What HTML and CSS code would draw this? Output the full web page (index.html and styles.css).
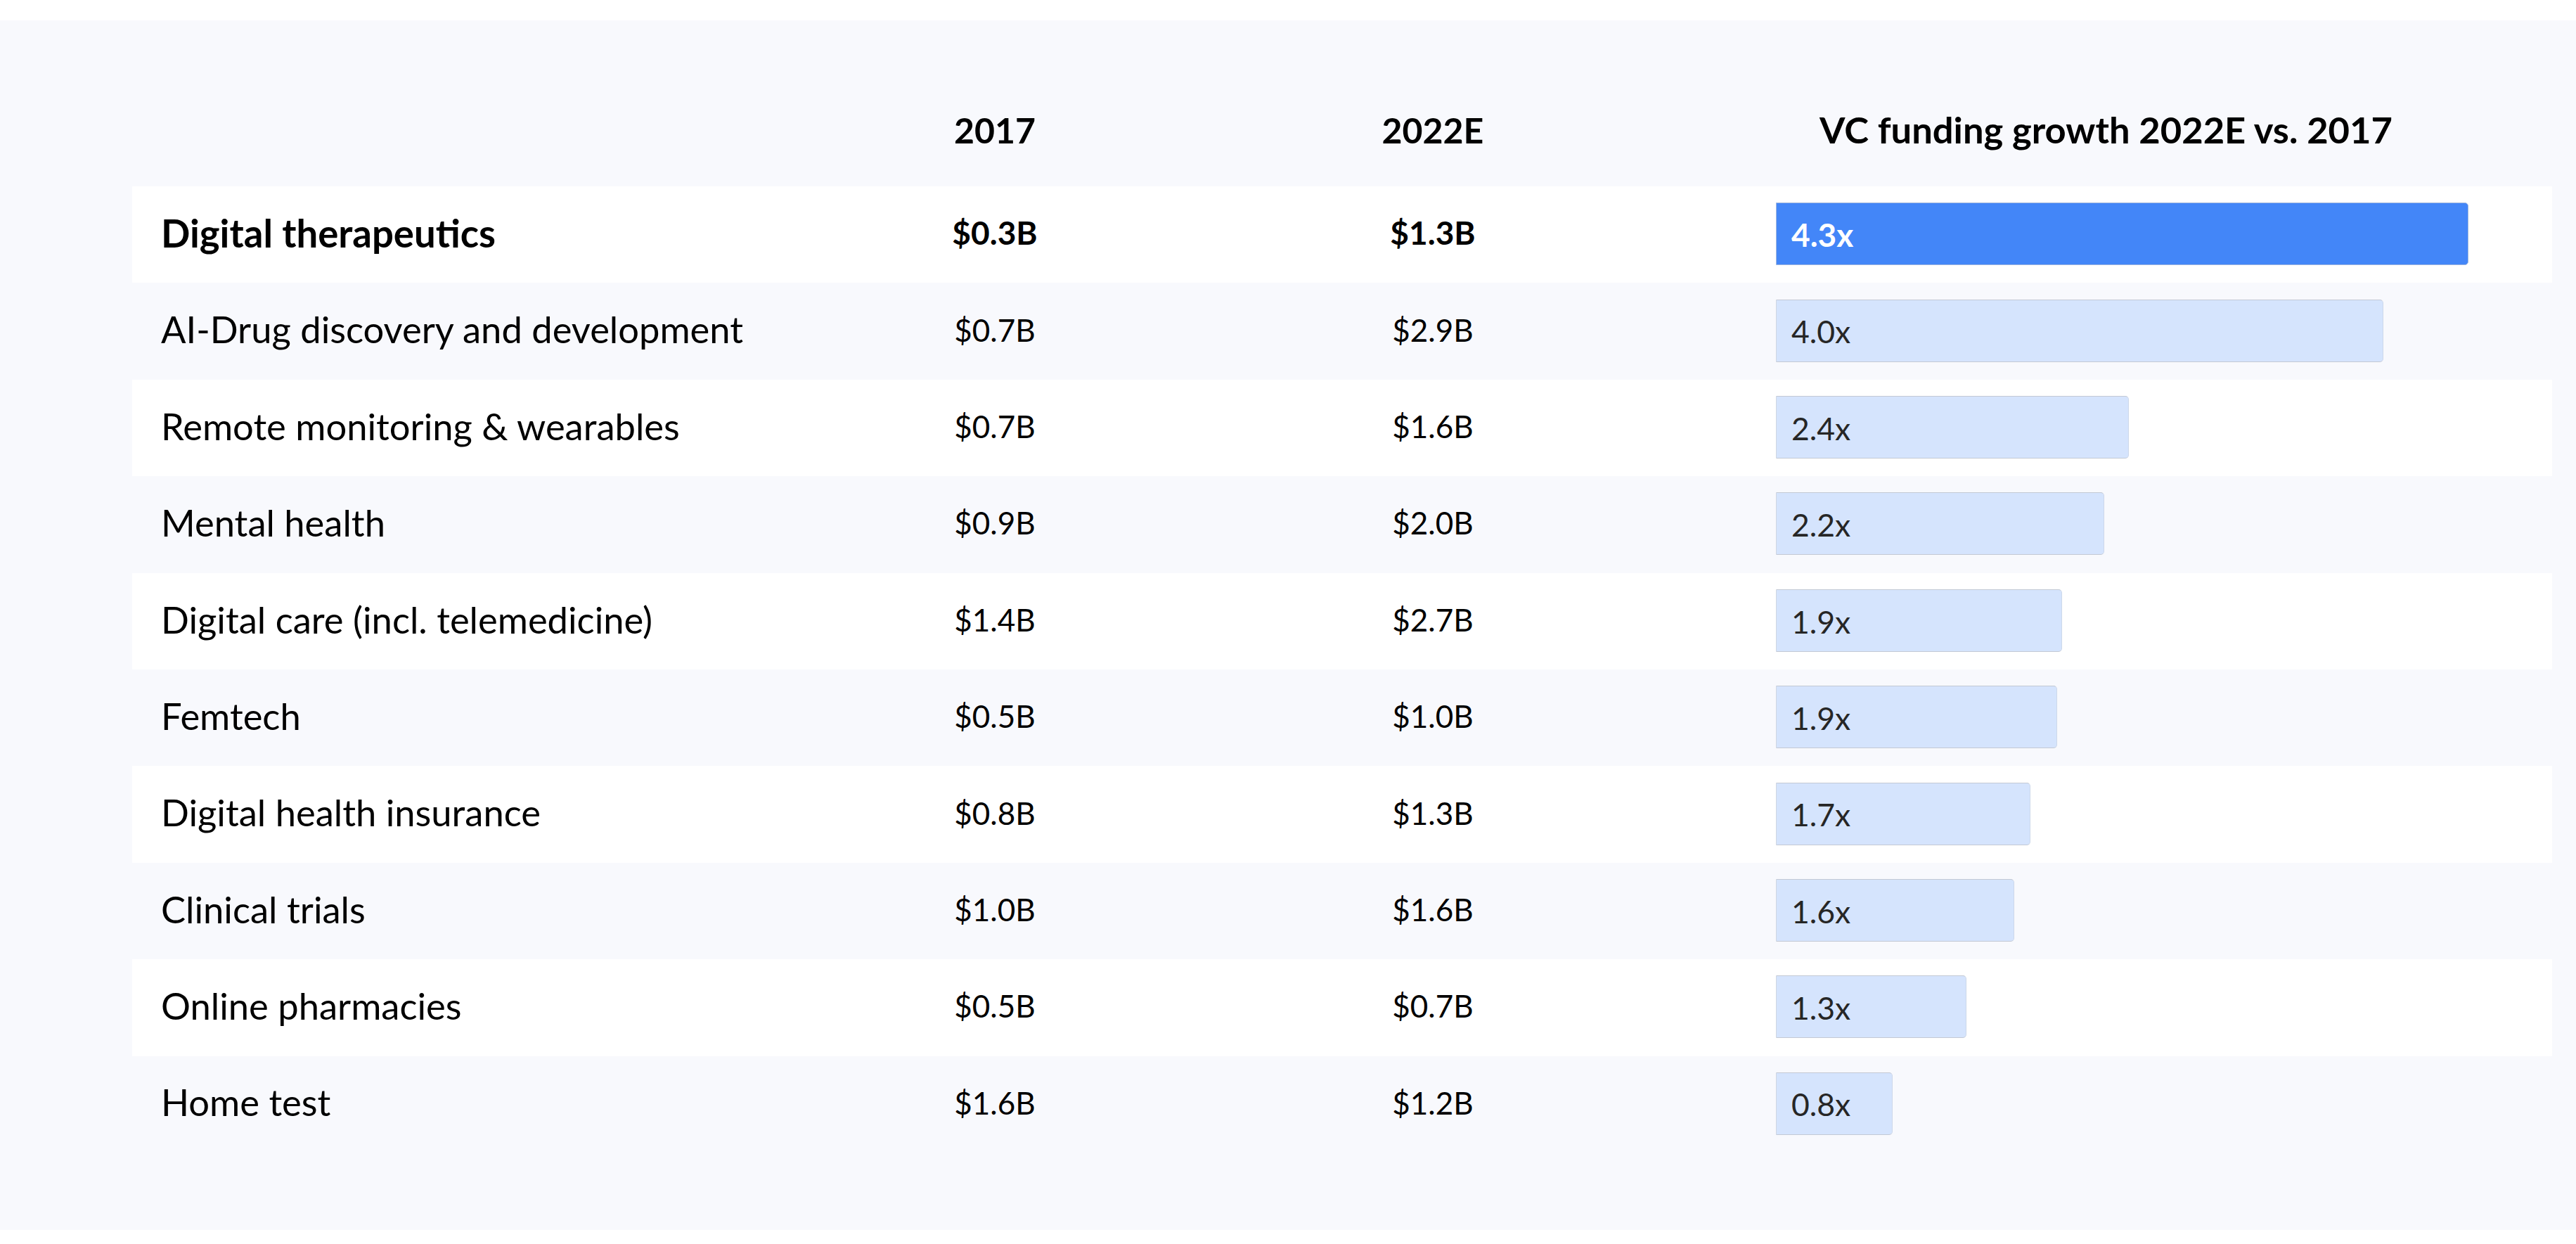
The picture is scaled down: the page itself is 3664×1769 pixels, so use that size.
FILE: index.html
```html
<!DOCTYPE html>
<html lang="en">
<head>
<meta charset="utf-8">
<title>VC funding growth</title>
<link rel="stylesheet" href="styles.css">
</head>
<body>
<div class="panel">
  <div class="table">
    <div class="row head">
      <div class="cell label"></div>
      <div class="cell num">2017</div>
      <div class="cell num">2022E</div>
      <div class="cell growth-head">VC funding growth 2022E vs. 2017</div>
    </div>
    <div class="row strong">
      <div class="cell label">Digital therapeutics</div>
      <div class="cell num">$0.3B</div>
      <div class="cell num">$1.3B</div>
      <div class="cell bar-cell"><div class="bar primary" style="width:985px">4.3x</div></div>
    </div>
    <div class="row">
      <div class="cell label">AI-Drug discovery and development</div>
      <div class="cell num">$0.7B</div>
      <div class="cell num">$2.9B</div>
      <div class="cell bar-cell"><div class="bar" style="width:864px">4.0x</div></div>
    </div>
    <div class="row">
      <div class="cell label">Remote monitoring &amp; wearables</div>
      <div class="cell num">$0.7B</div>
      <div class="cell num">$1.6B</div>
      <div class="cell bar-cell"><div class="bar" style="width:502px">2.4x</div></div>
    </div>
    <div class="row">
      <div class="cell label">Mental health</div>
      <div class="cell num">$0.9B</div>
      <div class="cell num">$2.0B</div>
      <div class="cell bar-cell"><div class="bar" style="width:467px">2.2x</div></div>
    </div>
    <div class="row">
      <div class="cell label">Digital care (incl. telemedicine)</div>
      <div class="cell num">$1.4B</div>
      <div class="cell num">$2.7B</div>
      <div class="cell bar-cell"><div class="bar" style="width:407px">1.9x</div></div>
    </div>
    <div class="row">
      <div class="cell label">Femtech</div>
      <div class="cell num">$0.5B</div>
      <div class="cell num">$1.0B</div>
      <div class="cell bar-cell"><div class="bar" style="width:400px">1.9x</div></div>
    </div>
    <div class="row">
      <div class="cell label">Digital health insurance</div>
      <div class="cell num">$0.8B</div>
      <div class="cell num">$1.3B</div>
      <div class="cell bar-cell"><div class="bar" style="width:362px">1.7x</div></div>
    </div>
    <div class="row">
      <div class="cell label">Clinical trials</div>
      <div class="cell num">$1.0B</div>
      <div class="cell num">$1.6B</div>
      <div class="cell bar-cell"><div class="bar" style="width:339px">1.6x</div></div>
    </div>
    <div class="row">
      <div class="cell label">Online pharmacies</div>
      <div class="cell num">$0.5B</div>
      <div class="cell num">$0.7B</div>
      <div class="cell bar-cell"><div class="bar" style="width:271px">1.3x</div></div>
    </div>
    <div class="row">
      <div class="cell label">Home test</div>
      <div class="cell num">$1.6B</div>
      <div class="cell num">$1.2B</div>
      <div class="cell bar-cell"><div class="bar" style="width:166px">0.8x</div></div>
    </div>
  </div>
</div>
</body>
</html>
```

FILE: styles.css
```css
html, body {
  margin: 0;
  padding: 0;
  background: #ffffff;
}

body {
  font-family: Lato, "Noto Sans", sans-serif;
  color: #000;
}

.panel {
  margin-top: 29px;
  height: 1720px;
  background: #f8f9fd;
  padding-left: 188px;
  box-sizing: border-box;
}

.table {
  width: 3442px;
}

.row {
  display: grid;
  grid-template-columns: 927px 600px 646px 1269px;
  align-items: center;
  height: 137.4px;
  font-size: 52.5px;
  line-height: 1;
}

.row:nth-child(even) {
  background: #ffffff;
}

.row.head {
  box-sizing: border-box;
  height: 236px;
  padding-top: 129px;
  align-items: baseline;
  font-weight: 700;
}

.row.head .num {
  font-size: 50px;
  padding-bottom: 0;
}

.row.strong {
  font-weight: 700;
}

.row.strong .label {
  font-size: 54.5px;
}

.row.strong .num {
  font-size: 46px;
}

.label {
  padding-left: 41px;
  padding-bottom: 5px;
}

.num {
  text-align: center;
  font-size: 44px;
  padding-bottom: 5px;
}

.growth-head {
  text-align: center;
  font-size: 52.5px;
}

.bar-cell {
  padding-left: 165px;
  padding-bottom: 2px;
}

.bar {
  box-sizing: border-box;
  height: 89px;
  display: flex;
  align-items: center;
  padding-left: 21px;
  padding-top: 3px;
  background: #d5e4fd;
  border: 1px solid #c3c9d4;
  border-left-color: #cfd6e2;
  border-right-color: #cdd8ea;
  border-radius: 0 5px 5px 0;
  font-size: 44.5px;
  font-weight: 400;
  color: #262626;
}

.bar.primary {
  background: #4386f8;
  border-color: #9fb6dd;
  color: #ffffff;
  font-size: 46px;
  font-weight: 700;
}
```
